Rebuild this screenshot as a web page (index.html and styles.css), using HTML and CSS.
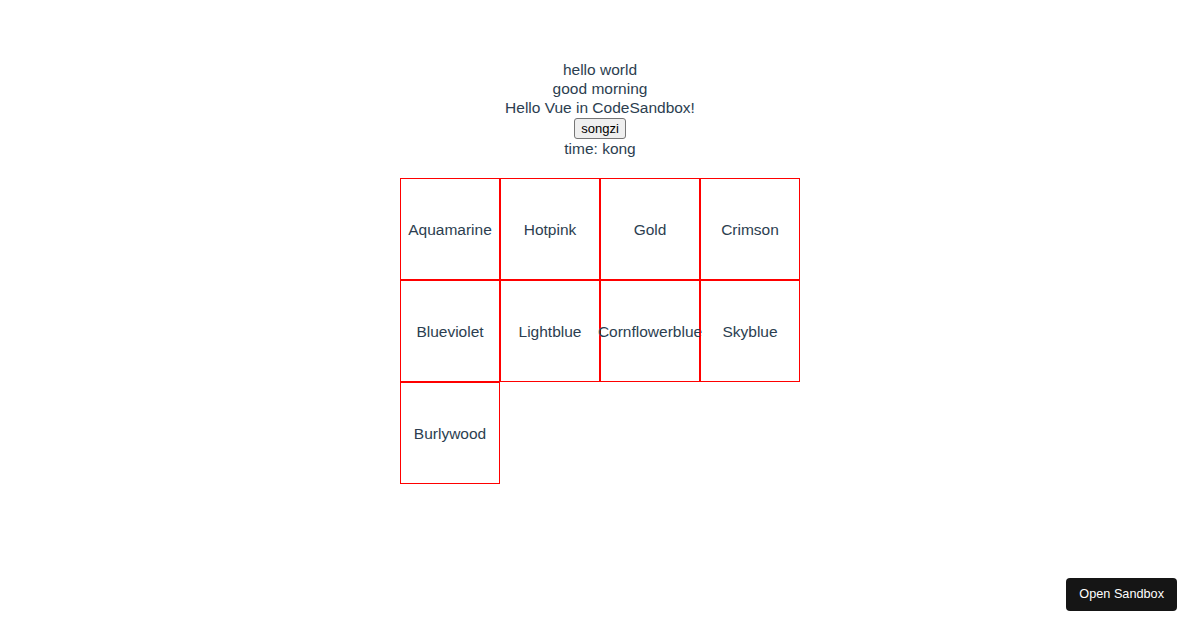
FILE: index.html
```html
<!DOCTYPE html>
<html>
<head>
<meta charset="utf-8">
<link rel="stylesheet" href="styles.css">
</head>
<body>
<div class="app">
  <div>hello world</div>
  <div>good morning</div>
  <div>Hello Vue in CodeSandbox!</div>
  <button class="btn">songzi</button>
  <div>time: kong</div>
  <div class="grid">
    <div class="cell">Aquamarine</div>
    <div class="cell">Hotpink</div>
    <div class="cell">Gold</div>
    <div class="cell">Crimson</div>
    <div class="cell">Blueviolet</div>
    <div class="cell">Lightblue</div>
    <div class="cell">Cornflowerblue</div>
    <div class="cell">Skyblue</div>
    <div class="cell">Burlywood</div>
  </div>
</div>
<a class="open">Open Sandbox</a>
</body>
</html>
```
FILE: styles.css
```css
body {
  margin: 0;
  background: #fff;
}
.app {
  font-family: "Liberation Sans", Arial, sans-serif;
  font-size: 15.5px;
  line-height: 19px;
  text-align: center;
  color: #2c3e50;
  padding-top: 60px;
}
.btn {
  font-family: "Liberation Sans", Arial, sans-serif;
  font-size: 13px;
  line-height: 15px;
  padding: 1px 6px;
  margin: 1px 0 0;
  color: #000;
  background: #efefef;
  border: 1px solid #767676;
  border-radius: 3px;
  height: 21px;
}
.grid {
  width: 400px;
  margin: 20px auto 0;
  display: flex;
  flex-wrap: wrap;
}
.cell {
  width: 98px;
  height: 100px;
  border: 1px solid red;
  display: flex;
  align-items: center;
  justify-content: center;
  white-space: nowrap;
}
.open {
  position: fixed;
  right: 23px;
  bottom: 19px;
  background: #151515;
  color: #fff;
  font-family: "Liberation Sans", Arial, sans-serif;
  font-size: 12.7px;
  line-height: 33px;
  height: 33px;
  padding: 0 13px;
  border-radius: 4px;
}
```
